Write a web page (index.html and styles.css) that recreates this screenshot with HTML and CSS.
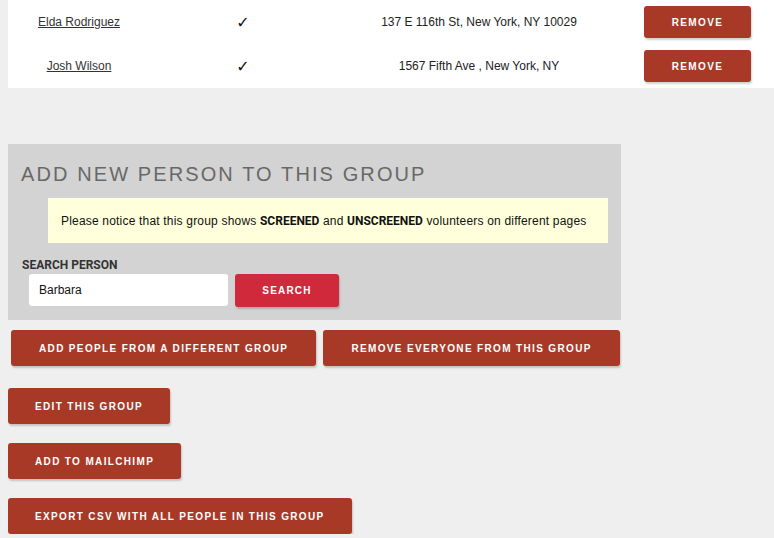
FILE: index.html
```html
<!DOCTYPE html>
<html>
<head>
<meta charset="utf-8">
<link rel="stylesheet" href="styles.css">
</head>
<body>
<div class="page">
  <div class="people">
    <div class="row">
      <div class="cell name"><a href="#">Elda Rodriguez</a></div>
      <div class="cell check">✓</div>
      <div class="cell addr">137 E 116th St, New York, NY 10029</div>
      <div class="cell act"><button class="btn btn-sm">REMOVE</button></div>
    </div>
    <div class="row">
      <div class="cell name"><a href="#">Josh Wilson</a></div>
      <div class="cell check">✓</div>
      <div class="cell addr">1567 Fifth Ave , New York, NY</div>
      <div class="cell act"><button class="btn btn-sm">REMOVE</button></div>
    </div>
  </div>

  <section class="panel">
    <h2 class="panel-title">ADD NEW PERSON TO THIS GROUP</h2>
    <div class="notice">Please notice that this group shows <b>SCREENED</b> and <b>UNSCREENED</b> volunteers on different pages</div>
    <div class="search-label">SEARCH PERSON</div>
    <div class="search-row">
      <input class="search-input" type="text" value="Barbara">
      <button class="btn btn-search">SEARCH</button>
    </div>
  </section>

  <div class="btn-row first">
    <button class="btn btn-wide">ADD PEOPLE FROM A DIFFERENT GROUP</button>
    <button class="btn btn-wide">REMOVE EVERYONE FROM THIS GROUP</button>
  </div>
  <div class="btn-row edit"><button class="btn">EDIT THIS GROUP</button></div>
  <div class="btn-row more"><button class="btn">ADD TO MAILCHIMP</button></div>
  <div class="btn-row more"><button class="btn">EXPORT CSV WITH ALL PEOPLE IN THIS GROUP</button></div>
</div>
</body>
</html>
```
FILE: styles.css
```css
html, body {
  margin: 0;
  padding: 0;
  background: #efefef;
  font-family: "Liberation Sans", Arial, sans-serif;
  color: #222;
}
.page {
  padding-left: 8px;
}
.people {
  background: #fff;
}
.row {
  display: grid;
  grid-template-columns: 142px 186px 286px 1fr;
  height: 44px;
  align-items: center;
}
.cell {
  text-align: center;
  font-size: 12px;
  color: #222;
}
.name a {
  color: #333;
  text-decoration: underline;
}
.check {
  font-family: "DejaVu Sans", sans-serif;
  font-weight: bold;
  font-size: 16px;
  color: #111;
}
.act {
  display: flex;
  justify-content: flex-start;
  padding-left: 22px;
}
.btn {
  font-family: "Liberation Sans", Arial, sans-serif;
  font-weight: bold;
  font-size: 10px;
  letter-spacing: 1.35px;
  color: #fff;
  background: #a93927;
  border: none;
  border-radius: 3px;
  height: 36px;
  padding: 0 27px;
  box-shadow: 1px 2px 2px rgba(0, 0, 0, 0.18);
  cursor: pointer;
}
.btn-wide {
  padding: 0 28px;
}
.btn-sm {
  height: 32px;
  width: 107px;
  padding: 0;
}
.panel {
  margin-top: 56px;
  width: 613px;
  box-sizing: border-box;
  background: #d3d3d3;
  padding: 18px 0 13px 0;
}
.panel-title {
  margin: 0 0 12px 13px;
  font-size: 20px;
  line-height: 24px;
  font-weight: normal;
  letter-spacing: 2.1px;
  color: #686868;
}
.notice {
  margin-left: 40px;
  width: 560px;
  box-sizing: border-box;
  height: 45px;
  background: #ffffdc;
  font-size: 12px;
  letter-spacing: 0.19px;
  line-height: 46px;
  padding-left: 13px;
  color: #111;
}
.notice b {
  font-family: Roboto, "Liberation Sans", sans-serif;
  font-weight: bold;
  letter-spacing: 0;
}
.search-label {
  margin: 15px 0 0 14px;
  font-family: Roboto, "Liberation Sans", sans-serif;
  font-weight: bold;
  font-size: 12px;
  line-height: 14px;
  color: #333;
}
.search-row {
  display: flex;
  gap: 7px;
  margin: 2px 0 0 21px;
}
.search-input {
  width: 199px;
  height: 32px;
  box-sizing: border-box;
  border: none;
  border-radius: 3px;
  background: #fff;
  padding: 0 10px;
  font-family: "Liberation Sans", Arial, sans-serif;
  font-size: 12px;
  color: #111;
}
.btn-search {
  background: #cf293b;
  height: 33px;
  width: 104px;
  padding: 0;
  font-size: 10px;
  letter-spacing: 1.2px;
}
.btn-row {
  display: flex;
  gap: 7px;
}
.btn-row.first {
  margin: 10px 0 0 3px;
}
.btn-row.edit {
  margin-top: 22px;
}
.btn-row.more {
  margin-top: 19px;
}
```
